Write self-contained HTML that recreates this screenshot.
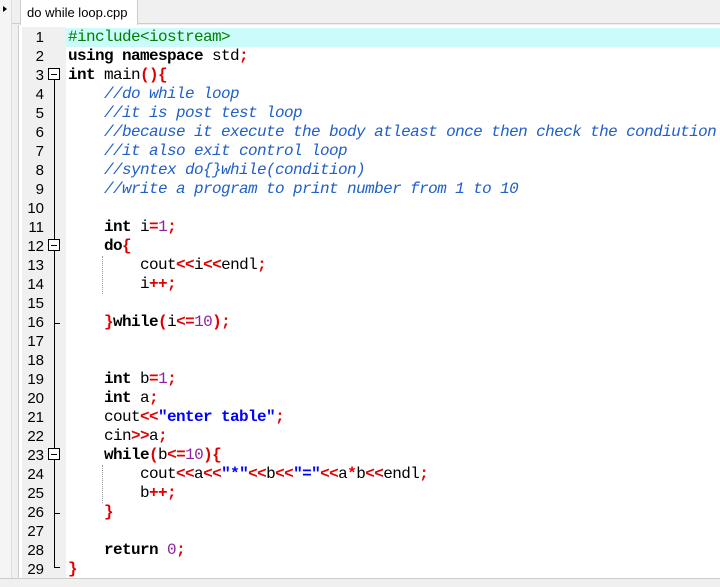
<!DOCTYPE html>
<html><head><meta charset="utf-8"><style>
*{margin:0;padding:0;box-sizing:border-box}
body{width:720px;height:587px;overflow:hidden;background:#f0f0f0;position:relative;font-family:"Liberation Mono",monospace}
.side{position:absolute;left:0;top:0;width:12px;height:587px;background:#f5f5f5;border-right:1px solid #ddd}
.tabbar{position:absolute;left:12px;top:0;width:708px;height:24px;background:#f0f0f0;border-bottom:1px solid #ccc}
.tab{position:absolute;left:8px;top:0;height:25px;padding:5px 10px 0 6px;background:#fff;border:1px solid #ccc;border-bottom:none;border-top:none;font:13px "Liberation Sans",sans-serif;color:#000}
.ed{position:absolute;left:18px;top:25px;width:702px;height:553px;background:#fff;border-left:1px solid #ccc}
.gut{position:absolute;left:22px;top:27px;width:44px;height:551px;background:#f0f0f0}
.bot{position:absolute;left:0;top:578px;width:720px;height:9px;background:#f0f0f0;border-top:1px solid #ccc}
.hl{position:absolute;left:66px;top:28px;width:654px;height:19px;background:#ccfbfb}
.ln{position:absolute;left:22px;width:22px;text-align:right;font:15px "Liberation Sans",sans-serif;color:#000;height:19px;line-height:19px}
.code{position:absolute;left:68px;height:19px;line-height:19px;font-size:16px;letter-spacing:-0.6px;white-space:pre;color:#000}
.k{font-weight:bold}.p{color:#e00000;font-weight:bold}.n{color:#8a1fa0}.s{color:#0000ff;font-weight:bold}
.c{color:#2060c8;font-style:italic}.g{color:#008000}
.box{position:absolute;left:48px;width:12px;height:12px;border:1px solid #000;background:#fff}
.box:after{content:"";position:absolute;left:2px;top:5px;width:6px;height:1px;background:#000}
.vl{position:absolute;left:54px;width:1px;background:#000}
.tk{position:absolute;left:54px;width:6px;height:1px;background:#000}
.gd{position:absolute;left:102px;width:0;border-left:1px dotted #999}
</style></head><body>
<div class="side"></div>
<div style="position:absolute;left:3px;top:6px;width:0;height:0;border-left:4px solid #000;border-top:3px solid transparent;border-bottom:3px solid transparent"></div>
<div class="tabbar"><div class="tab">do while loop.cpp</div></div>
<div class="ed"></div>
<div class="gut"></div>
<div class="hl"></div>
<div class="bot"></div>

<div class="ln" style="top:28px">1</div>
<div class="ln" style="top:47px">2</div>
<div class="ln" style="top:66px">3</div>
<div class="ln" style="top:85px">4</div>
<div class="ln" style="top:104px">5</div>
<div class="ln" style="top:123px">6</div>
<div class="ln" style="top:142px">7</div>
<div class="ln" style="top:161px">8</div>
<div class="ln" style="top:180px">9</div>
<div class="ln" style="top:199px">10</div>
<div class="ln" style="top:218px">11</div>
<div class="ln" style="top:237px">12</div>
<div class="ln" style="top:256px">13</div>
<div class="ln" style="top:275px">14</div>
<div class="ln" style="top:294px">15</div>
<div class="ln" style="top:313px">16</div>
<div class="ln" style="top:332px">17</div>
<div class="ln" style="top:351px">18</div>
<div class="ln" style="top:370px">19</div>
<div class="ln" style="top:389px">20</div>
<div class="ln" style="top:408px">21</div>
<div class="ln" style="top:427px">22</div>
<div class="ln" style="top:446px">23</div>
<div class="ln" style="top:465px">24</div>
<div class="ln" style="top:484px">25</div>
<div class="ln" style="top:503px">26</div>
<div class="ln" style="top:522px">27</div>
<div class="ln" style="top:541px">28</div>
<div class="ln" style="top:560px">29</div>

<div class="vl" style="top:80px;height:488px"></div>
<div class="tk" style="top:567px"></div>
<div class="tk" style="top:323px"></div>
<div class="tk" style="top:513px"></div>
<div class="box" style="top:68px"></div>
<div class="box" style="top:239px"></div>
<div class="box" style="top:448px"></div>
<div class="gd" style="top:256px;height:38px"></div>
<div class="gd" style="top:465px;height:38px"></div>

<div class="code" style="top:28px"><span class="g">#include&lt;iostream&gt;</span></div>
<div class="code" style="top:47px"><span class="k">using namespace</span> std<span class="p">;</span></div>
<div class="code" style="top:66px"><span class="k">int</span> main<span class="p">(){</span></div>
<div class="code" style="top:85px">    <span class="c">//do while loop</span></div>
<div class="code" style="top:104px">    <span class="c">//it is post test loop</span></div>
<div class="code" style="top:123px">    <span class="c">//because it execute the body atleast once then check the condiution</span></div>
<div class="code" style="top:142px">    <span class="c">//it also exit control loop</span></div>
<div class="code" style="top:161px">    <span class="c">//syntex do{}while(condition)</span></div>
<div class="code" style="top:180px">    <span class="c">//write a program to print number from 1 to 10</span></div>
<div class="code" style="top:218px">    <span class="k">int</span> i<span class="p">=</span><span class="n">1</span><span class="p">;</span></div>
<div class="code" style="top:237px">    <span class="k">do</span><span class="p">{</span></div>
<div class="code" style="top:256px">        cout<span class="p">&lt;&lt;</span>i<span class="p">&lt;&lt;</span>endl<span class="p">;</span></div>
<div class="code" style="top:275px">        i<span class="p">++;</span></div>
<div class="code" style="top:313px">    <span class="p">}</span><span class="k">while</span><span class="p">(</span>i<span class="p">&lt;=</span><span class="n">10</span><span class="p">);</span></div>
<div class="code" style="top:370px">    <span class="k">int</span> b<span class="p">=</span><span class="n">1</span><span class="p">;</span></div>
<div class="code" style="top:389px">    <span class="k">int</span> a<span class="p">;</span></div>
<div class="code" style="top:408px">    cout<span class="p">&lt;&lt;</span><span class="s">"enter table"</span><span class="p">;</span></div>
<div class="code" style="top:427px">    cin<span class="p">&gt;&gt;</span>a<span class="p">;</span></div>
<div class="code" style="top:446px">    <span class="k">while</span><span class="p">(</span>b<span class="p">&lt;=</span><span class="n">10</span><span class="p">){</span></div>
<div class="code" style="top:465px">        cout<span class="p">&lt;&lt;</span>a<span class="p">&lt;&lt;</span><span class="s">"*"</span><span class="p">&lt;&lt;</span>b<span class="p">&lt;&lt;</span><span class="s">"="</span><span class="p">&lt;&lt;</span>a<span class="p">*</span>b<span class="p">&lt;&lt;</span>endl<span class="p">;</span></div>
<div class="code" style="top:484px">        b<span class="p">++;</span></div>
<div class="code" style="top:503px">    <span class="p">}</span></div>
<div class="code" style="top:541px">    <span class="k">return</span> <span class="n">0</span><span class="p">;</span></div>
<div class="code" style="top:560px"><span class="p">}</span></div>
</body></html>
